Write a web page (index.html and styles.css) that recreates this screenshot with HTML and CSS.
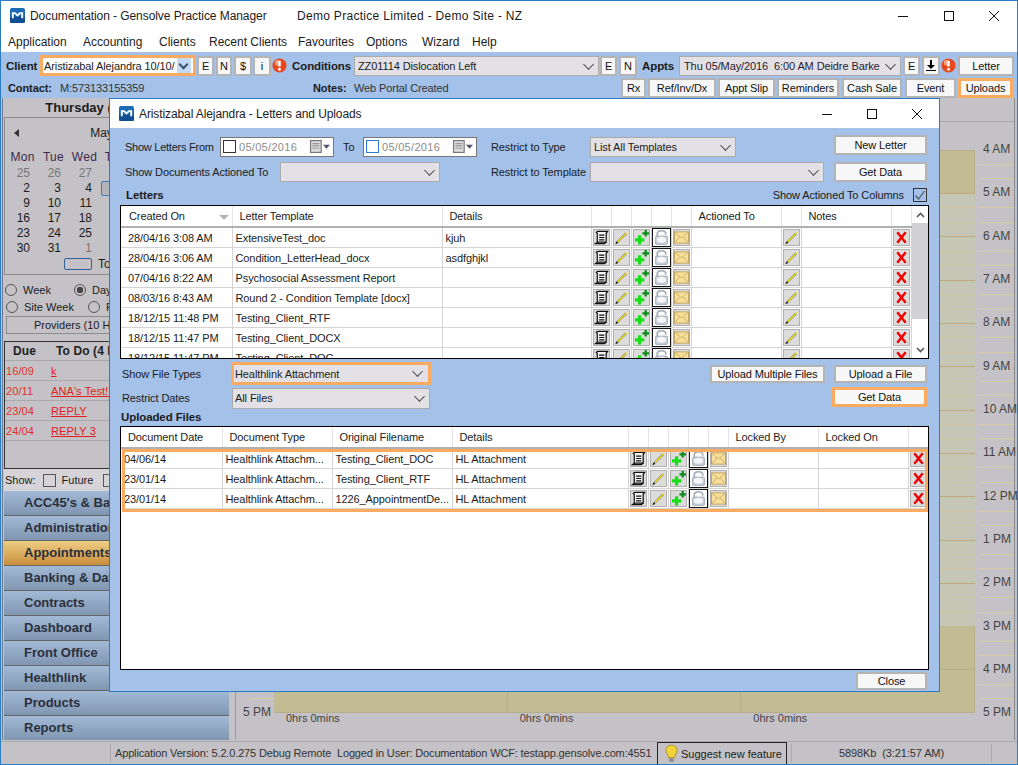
FILE: index.html
```html
<!DOCTYPE html>
<html lang="en-NZ">
<head>
    <meta charset="UTF-8">
    <meta name="viewport" content="width=device-width, initial-scale=1.0">
    <title>Documentation - Gensolve Practice Manager</title>
    <link rel="stylesheet" href="styles.css">
</head>
<body>
    <!-- Icon set used by the grids and toolbars -->
    <svg class="icon-defs" width="0" height="0">
        <symbol id="i-logo" viewBox="0 0 16 16">
            <rect width="16" height="16" rx="2" fill="#1b6cb5"/>
            <rect y="9" width="16" height="7" rx="2" fill="#0f4f92"/>
            <path d="M3 11V5.500h2.400L8 8l2.600-2.500H13V11" fill="none" stroke="#fff" stroke-width="2"/>
        </symbol>
        <symbol id="i-alert" viewBox="0 0 16 16">
            <circle cx="8" cy="8" r="7.500" fill="#e8481c"/>
            <circle cx="6" cy="5" r="3" fill="#f7a47f"/>
            <path d="M8 3v6" stroke="#fff" stroke-width="2.600"/>
            <circle cx="8" cy="12" r="1.500" fill="#fff"/>
        </symbol>
        <symbol id="i-doc" viewBox="0 0 16 16">
            <path d="M4 1.500h10.500L13 3.500V13H3.500V3.500L2.500 2.500zM3.500 13l-2 1.500h9.500l2-1.500" fill="#f2f2f2" stroke="#111" stroke-width="1.300"/>
            <path d="M5.500 5.500h5.500M5.500 8h5.500M5.500 10.500h5.500" stroke="#111" stroke-width="1.200"/>
        </symbol>
        <symbol id="i-pencil" viewBox="0 0 16 16">
            <path d="M3 13.500 13 3.500" stroke="#444" stroke-width="2"/>
            <path d="M4 12.500 13.500 3" stroke="#f7e81a" stroke-width="1.400"/>
            <path d="M1.500 15l2.500-1-1.500-1.500z" fill="#000"/>
        </symbol>
        <symbol id="i-add" viewBox="0 0 16 16">
            <path d="M6 5.500v10M1 10.500h10" stroke="#18e018" stroke-width="3.400"/>
            <path d="M12.500 0v7M9 3.500h7" stroke="#0d8a1a" stroke-width="2.400"/>
        </symbol>
        <symbol id="i-lock" viewBox="0 0 16 16">
            <path d="M3.500 7V4C3.500 1.800 5.500 .8 8 .8s4.500 1 4.500 3.200v1" fill="none" stroke="#a4aebb" stroke-width="1.800"/>
            <rect x="1.500" y="6.500" width="13" height="9" rx="1.500" fill="#c3ccd7" stroke="#949eab" stroke-width=".7"/>
            <ellipse cx="8" cy="10.500" rx="5" ry="3.200" fill="#f3f5f8"/>
        </symbol>
        <symbol id="i-mail" viewBox="0 0 16 16">
            <rect x=".5" y="2" width="15" height="12" fill="#f8e09a" stroke="#bfa25e"/>
            <path d="M1 2.500l7 6 7-6M1 13.500l5-6M15 13.500l-5-6" fill="none" stroke="#c9ab66"/>
        </symbol>
        <symbol id="i-del" viewBox="0 0 16 16">
            <path d="M3.500 2.500 12.500 13.500M12.500 2.500 3.500 13.500" stroke="#f00000" stroke-width="2.600"/>
        </symbol>
        <symbol id="i-bulb" viewBox="0 0 14 20">
            <path d="M7 1C3.500 1 1 3.500 1 6.500c0 3 2.500 4.500 3 8h6c.5-3.500 3-5 3-8C13 3.500 10.500 1 7 1z" fill="#f2d43a" stroke="#b08a20"/>
            <rect x="4.500" y="15" width="5" height="4" rx="1" fill="#8b8b8b"/>
        </symbol>
    </svg>

    <div class="app">
        <!-- Main window chrome -->
        <div class="titlebar">
            <svg class="logo"><use href="#i-logo"/></svg>
            <span class="app-title">Documentation - Gensolve Practice Manager</span>
            <span class="practice-title">Demo Practice Limited - Demo Site - NZ</span>
            <div class="window-controls app-controls">
                <svg viewBox="0 0 10 10"><path d="M0 5.500h10" stroke="#111"/></svg>
                <svg viewBox="0 0 10 10"><rect x=".5" y=".5" width="9" height="9" fill="none" stroke="#111"/></svg>
                <svg viewBox="0 0 10 10"><path d="M0 0l10 10M10 0 0 10" stroke="#111"/></svg>
            </div>
        </div>

        <div class="menubar">
            <span>Application</span>
            <span>Accounting</span>
            <span>Clients</span>
            <span>Recent Clients</span>
            <span>Favourites</span>
            <span>Options</span>
            <span>Wizard</span>
            <span>Help</span>
        </div>

        <div class="toolbar">
            <div class="toolbar-row">
                <b class="lbl-client">Client</b>
                <div class="client-combo"><span>Aristizabal Alejandra 10/10/</span><i class="client-arrow"></i></div>
                <button class="btn w-e">E</button>
                <button class="btn w-n small">N</button>
                <button class="btn w-s">$</button>
                <button class="btn w-i">i</button>
                <svg class="alert"><use href="#i-alert"/></svg>
                <b class="lbl-conditions">Conditions</b>
                <div class="combo w-conditions">ZZ01114 Dislocation Left</div>
                <button class="btn w-e">E</button>
                <button class="btn w-n">N</button>
                <b class="lbl-appts">Appts</b>
                <div class="combo w-appts">Thu 05/May/2016&nbsp; 6:00 AM Deidre Barke</div>
                <button class="btn w-e far">E</button>
                <button class="btn w-n"><svg class="down-icon" viewBox="0 0 10 11"><path d="M5 0v6" stroke="#000" stroke-width="2"/><path d="M1 5h8L5 9z M0 10h10v1H0z" fill="#000"/></svg></button>
                <svg class="alert"><use href="#i-alert"/></svg>
                <button class="btn w-letter">Letter</button>
            </div>
            <div class="toolbar-row second">
                <b class="lbl-contact">Contact:</b>
                <span class="contact-no">M:573133155359</span>
                <b class="lbl-notes">Notes:</b>
                <span class="notes-text">Web Portal Created</span>
                <button class="btn w-rx">Rx</button>
                <button class="btn w-ref">Ref/Inv/Dx</button>
                <button class="btn w-slip">Appt Slip</button>
                <button class="btn w-rem">Reminders</button>
                <button class="btn w-cash">Cash Sale</button>
                <button class="btn w-event">Event</button>
                <button class="btn orange w-uploads">Uploads</button>
            </div>
        </div>

        <div class="workspace">
            <!-- Left side: calendar, to do list, navigation -->
            <div class="left-pane">
                <div class="day-heading">Thursday (5 May 2016)</div>
                <div class="calendar">
                    <div class="cal-nav"><i class="cal-prev"></i><span>May 2016</span></div>
                    <div class="cal-grid cal-dow">
                        <span>Mon</span><span>Tue</span><span>Wed</span><span>Thu</span><span>Fri</span><span>Sat</span><span>Sun</span>
                    </div>
                    <div class="cal-grid cal-days">
                        <span class="off">25</span><span class="off">26</span><span class="off">27</span><span class="off">28</span><span class="off">29</span><span class="off">30</span><span>1</span>
                        <span>2</span><span>3</span><span>4</span><span class="sel">5</span><span>6</span><span>7</span><span>8</span>
                        <span>9</span><span>10</span><span>11</span><span>12</span><span>13</span><span>14</span><span>15</span>
                        <span>16</span><span>17</span><span>18</span><span>19</span><span>20</span><span>21</span><span>22</span>
                        <span>23</span><span>24</span><span>25</span><span>26</span><span>27</span><span>28</span><span>29</span>
                        <span>30</span><span>31</span><span class="off">1</span><span class="off">2</span><span class="off">3</span><span class="off">4</span><span class="off">5</span>
                    </div>
                    <div class="cal-today"><i></i>Today: 5/05/2016</div>
                </div>
                <div class="view-options">
                    <label class="radio r-week"><i></i>Week</label>
                    <label class="radio r-day"><i class="on"></i>Day</label>
                </div>
                <div class="view-options">
                    <label class="radio r-site"><i></i>Site Week</label>
                    <label class="radio"><i></i>Fortnight</label>
                </div>
                <div class="providers">Providers (10 Hidden)</div>

                <div class="todo">
                    <div class="todo-row todo-head"><span>Due</span><span>To Do (4 Items)</span></div>
                    <div class="todo-row"><span>16/09</span><a>k</a></div>
                    <div class="todo-row"><span>20/11</span><a>ANA's Test! Follow up</a></div>
                    <div class="todo-row"><span>23/04</span><a>REPLY</a></div>
                    <div class="todo-row"><span>24/04</span><a>REPLY 3</a></div>
                </div>
                <div class="todo-show">Show: <i></i> Future <i class="second-box"></i> Completed</div>

                <div class="nav-item">ACC45's &amp; Batches</div>
                <div class="nav-item">Administration</div>
                <div class="nav-item active">Appointments</div>
                <div class="nav-item">Banking &amp; Day End</div>
                <div class="nav-item">Contracts</div>
                <div class="nav-item">Dashboard</div>
                <div class="nav-item">Front Office</div>
                <div class="nav-item">Healthlink</div>
                <div class="nav-item">Products</div>
                <div class="nav-item">Reports</div>
            </div>

            <!-- Schedule behind the dialog -->
            <div class="schedule">
                <div class="schedule-head"></div>
                <div class="schedule-body">
                    <div class="hours hours-left">
                        <div class="hour">4 AM</div><div class="hour">5 AM</div><div class="hour">6 AM</div><div class="hour">7 AM</div><div class="hour">8 AM</div><div class="hour">9 AM</div><div class="hour">10 AM</div><div class="hour">11 AM</div><div class="hour">12 PM</div><div class="hour">1 PM</div><div class="hour">2 PM</div><div class="hour">3 PM</div><div class="hour">4 PM</div><div class="hour">5 PM</div>
                    </div>
                    <div class="day-col"><div class="closed one"></div><div class="open"></div><div class="closed two"></div><div class="day-total">0hrs 0mins</div></div>
                    <div class="day-col"><div class="closed one"></div><div class="open"></div><div class="closed two"></div><div class="day-total">0hrs 0mins</div></div>
                    <div class="day-col"><div class="closed one"></div><div class="open"></div><div class="closed two"></div><div class="day-total">0hrs 0mins</div></div>
                    <div class="hours hours-right">
                        <div class="hour">4 AM</div><div class="hour">5 AM</div><div class="hour">6 AM</div><div class="hour">7 AM</div><div class="hour">8 AM</div><div class="hour">9 AM</div><div class="hour">10 AM</div><div class="hour">11 AM</div><div class="hour">12 PM</div><div class="hour">1 PM</div><div class="hour">2 PM</div><div class="hour">3 PM</div><div class="hour">4 PM</div><div class="hour">5 PM</div>
                    </div>
                </div>
            </div>
        </div>

        <div class="statusbar">
            <span class="status-empty"></span>
            <span class="status-version">Application Version: 5.2.0.275 Debug Remote&nbsp; Logged in User: Documentation WCF: testapp.gensolve.com:4551</span>
            <span class="status-suggest"><svg><use href="#i-bulb"/></svg>Suggest new feature</span>
            <span class="status-memory">5898Kb&nbsp; (3:21:57 AM)</span>
        </div>

        <!-- Letters and Uploads dialog -->
        <div class="dialog">
            <div class="dialog-title">
                <svg class="logo"><use href="#i-logo"/></svg>
                <span>Aristizabal Alejandra - Letters and Uploads</span>
                <div class="window-controls dialog-controls">
                    <svg viewBox="0 0 10 10"><path d="M0 5.500h10" stroke="#111"/></svg>
                    <svg viewBox="0 0 10 10"><rect x=".5" y=".5" width="9" height="9" fill="none" stroke="#111"/></svg>
                    <svg viewBox="0 0 10 10"><path d="M0 0l10 10M10 0 0 10" stroke="#111"/></svg>
                </div>
            </div>

            <div class="dialog-body">
                <div class="filter-row row-a">
                    <label class="l-from">Show Letters From</label>
                    <div class="date-box"><i class="date-check"></i>05/05/2016<svg class="cal-icon" viewBox="0 0 17 11"><rect x=".5" y=".5" width="9" height="10" fill="#ddd" stroke="#777"/><path d="M2 3h6M2 5h6M2 7h6" stroke="#999"/><path d="M11 4h6l-3 3.500z" fill="#556"/></svg></div>
                    <label class="l-to">To</label>
                    <div class="date-box"><i class="date-check focus"></i>05/05/2016<svg class="cal-icon" viewBox="0 0 17 11"><rect x=".5" y=".5" width="9" height="10" fill="#ddd" stroke="#777"/><path d="M2 3h6M2 5h6M2 7h6" stroke="#999"/><path d="M11 4h6l-3 3.500z" fill="#556"/></svg></div>
                    <label class="l-restrict">Restrict to Type</label>
                    <div class="combo w-type">List All Templates</div>
                    <button class="btn w-action">New Letter</button>
                </div>
                <div class="filter-row row-b">
                    <label class="l-actioned">Show Documents Actioned To</label>
                    <div class="combo w-actioned"></div>
                    <label class="l-restrict">Restrict to Template</label>
                    <div class="combo w-template"></div>
                    <button class="btn w-action">Get Data</button>
                </div>
                <div class="section-row">
                    <b>Letters</b>
                    <span class="show-columns">Show Actioned To Columns</span>
                    <i class="checkbox"><svg viewBox="0 0 12 12"><path d="M1.500 6.500 4.500 10 10.500 2" fill="none" stroke="#555" stroke-width="1.200"/></svg></i>
                </div>

                <div class="grid letters-grid">
                    <table>
                        <colgroup>
                            <col class="c-created"><col class="c-template"><col class="c-details">
                            <col class="c-i"><col class="c-i"><col class="c-i"><col class="c-i"><col class="c-i">
                            <col class="c-mid"><col class="c-i"><col class="c-mid"><col class="c-i">
                        </colgroup>
                        <thead>
                            <tr><th class="first">Created On<i class="sort-arrow"></i></th><th>Letter Template</th><th>Details</th><th></th><th></th><th></th><th></th><th></th><th>Actioned To</th><th></th><th>Notes</th><th></th></tr>
                        </thead>
                        <tbody>
                            <tr>
                                <td class="first">28/04/16 3:08 AM</td><td>ExtensiveTest_doc</td><td>kjuh</td>
                                <td class="ic"><span class="ib"><svg><use href="#i-doc"/></svg></span></td><td class="ic"><span class="ib"><svg><use href="#i-pencil"/></svg></span></td><td class="ic"><span class="ib"><svg><use href="#i-add"/></svg></span></td><td class="ic"><span class="ib lock"><svg><use href="#i-lock"/></svg></span></td><td class="ic"><span class="ib"><svg><use href="#i-mail"/></svg></span></td>
                                <td></td><td class="ic"><span class="ib"><svg><use href="#i-pencil"/></svg></span></td><td></td><td class="ic"><span class="ib"><svg><use href="#i-del"/></svg></span></td>
                            </tr>
                            <tr>
                                <td class="first">28/04/16 3:06 AM</td><td>Condition_LetterHead_docx</td><td>asdfghjkl</td>
                                <td class="ic"><span class="ib"><svg><use href="#i-doc"/></svg></span></td><td class="ic"><span class="ib"><svg><use href="#i-pencil"/></svg></span></td><td class="ic"><span class="ib"><svg><use href="#i-add"/></svg></span></td><td class="ic"><span class="ib lock"><svg><use href="#i-lock"/></svg></span></td><td class="ic"><span class="ib"><svg><use href="#i-mail"/></svg></span></td>
                                <td></td><td class="ic"><span class="ib"><svg><use href="#i-pencil"/></svg></span></td><td></td><td class="ic"><span class="ib"><svg><use href="#i-del"/></svg></span></td>
                            </tr>
                            <tr>
                                <td class="first">07/04/16 8:22 AM</td><td>Psychosocial Assessment Report</td><td></td>
                                <td class="ic"><span class="ib"><svg><use href="#i-doc"/></svg></span></td><td class="ic"><span class="ib"><svg><use href="#i-pencil"/></svg></span></td><td class="ic"><span class="ib"><svg><use href="#i-add"/></svg></span></td><td class="ic"><span class="ib lock"><svg><use href="#i-lock"/></svg></span></td><td class="ic"><span class="ib"><svg><use href="#i-mail"/></svg></span></td>
                                <td></td><td class="ic"><span class="ib"><svg><use href="#i-pencil"/></svg></span></td><td></td><td class="ic"><span class="ib"><svg><use href="#i-del"/></svg></span></td>
                            </tr>
                            <tr>
                                <td class="first">08/03/16 8:43 AM</td><td>Round 2 - Condition Template [docx]</td><td></td>
                                <td class="ic"><span class="ib"><svg><use href="#i-doc"/></svg></span></td><td class="ic"><span class="ib"><svg><use href="#i-pencil"/></svg></span></td><td class="ic"><span class="ib"><svg><use href="#i-add"/></svg></span></td><td class="ic"><span class="ib lock"><svg><use href="#i-lock"/></svg></span></td><td class="ic"><span class="ib"><svg><use href="#i-mail"/></svg></span></td>
                                <td></td><td class="ic"><span class="ib"><svg><use href="#i-pencil"/></svg></span></td><td></td><td class="ic"><span class="ib"><svg><use href="#i-del"/></svg></span></td>
                            </tr>
                            <tr>
                                <td class="first">18/12/15 11:48 PM</td><td>Testing_Client_RTF</td><td></td>
                                <td class="ic"><span class="ib"><svg><use href="#i-doc"/></svg></span></td><td class="ic"><span class="ib"><svg><use href="#i-pencil"/></svg></span></td><td class="ic"><span class="ib"><svg><use href="#i-add"/></svg></span></td><td class="ic"><span class="ib lock"><svg><use href="#i-lock"/></svg></span></td><td class="ic"><span class="ib"><svg><use href="#i-mail"/></svg></span></td>
                                <td></td><td class="ic"><span class="ib"><svg><use href="#i-pencil"/></svg></span></td><td></td><td class="ic"><span class="ib"><svg><use href="#i-del"/></svg></span></td>
                            </tr>
                            <tr>
                                <td class="first">18/12/15 11:47 PM</td><td>Testing_Client_DOCX</td><td></td>
                                <td class="ic"><span class="ib"><svg><use href="#i-doc"/></svg></span></td><td class="ic"><span class="ib"><svg><use href="#i-pencil"/></svg></span></td><td class="ic"><span class="ib"><svg><use href="#i-add"/></svg></span></td><td class="ic"><span class="ib lock"><svg><use href="#i-lock"/></svg></span></td><td class="ic"><span class="ib"><svg><use href="#i-mail"/></svg></span></td>
                                <td></td><td class="ic"><span class="ib"><svg><use href="#i-pencil"/></svg></span></td><td></td><td class="ic"><span class="ib"><svg><use href="#i-del"/></svg></span></td>
                            </tr>
                            <tr>
                                <td class="first">18/12/15 11:47 PM</td><td>Testing_Client_DOC</td><td></td>
                                <td class="ic"><span class="ib"><svg><use href="#i-doc"/></svg></span></td><td class="ic"><span class="ib"><svg><use href="#i-pencil"/></svg></span></td><td class="ic"><span class="ib"><svg><use href="#i-add"/></svg></span></td><td class="ic"><span class="ib lock"><svg><use href="#i-lock"/></svg></span></td><td class="ic"><span class="ib"><svg><use href="#i-mail"/></svg></span></td>
                                <td></td><td class="ic"><span class="ib"><svg><use href="#i-pencil"/></svg></span></td><td></td><td class="ic"><span class="ib"><svg><use href="#i-del"/></svg></span></td>
                            </tr>
                        </tbody>
                    </table>
                    <div class="scrollbar">
                        <svg class="scroll-up" viewBox="0 0 9 6"><path d="M1 5l3.500-3.500L8 5" fill="none" stroke="#555" stroke-width="1.600"/></svg>
                        <div class="scroll-thumb"></div>
                        <svg class="scroll-down" viewBox="0 0 9 6"><path d="M1 1l3.500 3.500L8 1" fill="none" stroke="#555" stroke-width="1.600"/></svg>
                    </div>
                </div>

                <div class="filter-row row-c">
                    <label class="l-files">Show File Types</label>
                    <div class="combo orange-combo">Healthlink Attachment</div>
                    <button class="btn w-multi">Upload Multiple Files</button>
                    <button class="btn w-action">Upload a File</button>
                </div>
                <div class="filter-row row-d">
                    <label class="l-files">Restrict Dates</label>
                    <div class="combo w-dates">All Files</div>
                    <button class="btn orange w-getdata">Get Data</button>
                </div>
                <div class="uploaded-title"><b>Uploaded Files</b></div>

                <div class="grid uploads-grid">
                    <table>
                        <colgroup>
                            <col class="c-docdate"><col class="c-doctype"><col class="c-filename"><col class="c-updetails">
                            <col class="c-i"><col class="c-i"><col class="c-i"><col class="c-i"><col class="c-i">
                            <col class="c-mid"><col class="c-mid"><col class="c-i">
                        </colgroup>
                        <thead>
                            <tr><th>Document Date</th><th>Document Type</th><th>Original Filename</th><th>Details</th><th></th><th></th><th></th><th></th><th></th><th>Locked By</th><th>Locked On</th><th></th></tr>
                        </thead>
                        <tbody>
                            <tr>
                                <td>04/06/14</td><td>Healthlink Attachm...</td><td>Testing_Client_DOC</td><td>HL Attachment</td>
                                <td class="ic"><span class="ib"><svg><use href="#i-doc"/></svg></span></td><td class="ic"><span class="ib"><svg><use href="#i-pencil"/></svg></span></td><td class="ic"><span class="ib"><svg><use href="#i-add"/></svg></span></td><td class="ic"><span class="ib lock"><svg><use href="#i-lock"/></svg></span></td><td class="ic"><span class="ib"><svg><use href="#i-mail"/></svg></span></td>
                                <td></td><td></td><td class="ic"><span class="ib"><svg><use href="#i-del"/></svg></span></td>
                            </tr>
                            <tr>
                                <td>23/01/14</td><td>Healthlink Attachm...</td><td>Testing_Client_RTF</td><td>HL Attachment</td>
                                <td class="ic"><span class="ib"><svg><use href="#i-doc"/></svg></span></td><td class="ic"><span class="ib"><svg><use href="#i-pencil"/></svg></span></td><td class="ic"><span class="ib"><svg><use href="#i-add"/></svg></span></td><td class="ic"><span class="ib lock"><svg><use href="#i-lock"/></svg></span></td><td class="ic"><span class="ib"><svg><use href="#i-mail"/></svg></span></td>
                                <td></td><td></td><td class="ic"><span class="ib"><svg><use href="#i-del"/></svg></span></td>
                            </tr>
                            <tr>
                                <td>23/01/14</td><td>Healthlink Attachm...</td><td>1226_AppointmentDe...</td><td>HL Attachment</td>
                                <td class="ic"><span class="ib"><svg><use href="#i-doc"/></svg></span></td><td class="ic"><span class="ib"><svg><use href="#i-pencil"/></svg></span></td><td class="ic"><span class="ib"><svg><use href="#i-add"/></svg></span></td><td class="ic"><span class="ib lock"><svg><use href="#i-lock"/></svg></span></td><td class="ic"><span class="ib"><svg><use href="#i-mail"/></svg></span></td>
                                <td></td><td></td><td class="ic"><span class="ib"><svg><use href="#i-del"/></svg></span></td>
                            </tr>
                        </tbody>
                    </table>
                    <div class="row-highlight"></div>
                </div>

                <div class="dialog-footer"><button class="btn w-close">Close</button></div>
            </div>
        </div>
    </div>
</body>
</html>
```

FILE: styles.css
```css
* {
    box-sizing: border-box;
}

body {
    margin: 0;
    font-family: "Liberation Sans", Arial, sans-serif;
    font-size: 11px;
    letter-spacing: -0.1px;
    color: #1c1c1c;
}

.icon-defs {
    position: absolute;
}

.app {
    position: relative;
    width: 1018px;
    height: 765px;
    overflow: hidden;
    display: flex;
    flex-direction: column;
    border: 1px solid #2b7cc4;
    background-color: #c4c2c6;
}

/* Window chrome */
.titlebar {
    height: 29px;
    flex: none;
    display: flex;
    align-items: center;
    font-size: 12px;
    background-color: white;
}

.logo {
    width: 15px;
    height: 15px;
    flex: none;
}

.titlebar .logo {
    margin-left: 9px;
}

.app-title {
    margin-left: 5px;
    width: 267px;
    letter-spacing: -0.07px;
}

.practice-title {
    letter-spacing: 0.3px;
}

.window-controls {
    margin-left: auto;
    display: flex;
}

.window-controls svg {
    width: 10px;
    height: 10px;
}

.app-controls {
    gap: 35.500px;
    margin-right: 18px;
}

.dialog-controls {
    gap: 35px;
    margin-right: 17px;
}

.menubar {
    height: 22px;
    flex: none;
    display: grid;
    grid-template-columns: 75px 76px 50px 89px 68px 56px 50px auto;
    padding: 2px 0 0 7px;
    align-items: center;
    font-size: 12px;
    letter-spacing: 0;
    background-color: white;
}

.toolbar {
    height: 46px;
    flex: none;
    padding-top: 3px;
    background-color: #a3c1e9;
}

.toolbar b {
    flex: none;
}

.toolbar-row {
    display: flex;
    align-items: center;
    height: 21px;
}

.toolbar-row.second {
    margin-top: 2px;
    height: 20px;
}

.btn {
    height: 20px;
    padding: 0;
    flex: none;
    font: inherit;
    letter-spacing: inherit;
    white-space: nowrap;
    color: #111;
    background-color: #f7f7f7;
    border: 2px solid #b4b4b4;
    border-radius: 0;
}

.btn.orange {
    border: 3px solid #fbab60;
}

.combo {
    position: relative;
    height: 20px;
    flex: none;
    padding: 0 20px 0 3px;
    line-height: 18px;
    white-space: nowrap;
    overflow: hidden;
    background-color: #e3e1e5;
    border: 1px solid #aaa;
}

.combo::after {
    content: "";
    position: absolute;
    right: 6px;
    top: 4px;
    width: 6px;
    height: 6px;
    border-right: 1px solid #555;
    border-bottom: 1px solid #555;
    transform: rotate(45deg) scale(1.1);
}

.lbl-client {
    margin-left: 5px;
    width: 34px;
    font-size: 11.500px;
}

.client-combo {
    width: 156px;
    height: 21px;
    flex: none;
    display: flex;
    align-items: center;
    padding-left: 1px;
    background-color: white;
    border: 3px solid #fbab60;
    white-space: nowrap;
    overflow: hidden;
}

.client-combo span {
    width: 131px;
    flex: none;
    overflow: hidden;
}

.client-arrow {
    position: relative;
    width: 14px;
    height: 15px;
    margin-left: 2px;
    flex: none;
    background-color: #c2d9f3;
}

.client-arrow::after {
    content: "";
    position: absolute;
    left: 3px;
    top: 3px;
    width: 5px;
    height: 5px;
    border-right: 2px solid #3c5068;
    border-bottom: 2px solid #3c5068;
    transform: rotate(45deg);
}

.w-e { width: 17px; margin-left: 1px; }
.w-e.far { margin-left: 2px; }
.w-n { width: 18px; margin-left: 2px; }
.w-n.small { width: 16px; }
.w-s { width: 18px; margin-left: 2px; }
.w-i { width: 18px; margin-left: 1px; }

.alert {
    width: 15px;
    height: 15px;
    flex: none;
    margin-left: 1px;
}

.down-icon {
    width: 10px;
    height: 11px;
    display: block;
    margin: auto;
}

.lbl-conditions {
    margin-left: 5px;
    width: 62px;
    font-size: 11.500px;
}

.w-conditions { width: 245px; }

.lbl-appts {
    margin-left: 5px;
    width: 37px;
    font-size: 11.500px;
}

.w-appts { width: 222px; padding-left: 4px; color: #2a1a30; }
.w-letter { width: 56px; margin-left: 2px; }

.lbl-contact {
    margin-left: 7px;
    width: 52px;
}

.contact-no {
    width: 253px;
    flex: none;
    color: #333;
}

.lbl-notes {
    width: 41px;
}

.notes-text {
    width: 267px;
    flex: none;
    color: #333;
}

.w-rx { width: 25px; }
.w-ref { width: 68px; margin-left: 2px; }
.w-slip { width: 57px; margin-left: 2px; }
.w-rem { width: 62px; margin-left: 2px; }
.w-cash { width: 60px; margin-left: 3px; }
.w-event { width: 51px; margin-left: 3px; }
.w-uploads { width: 55px; margin-left: 2px; }

.workspace {
    flex: 1;
    min-height: 0;
    display: flex;
    padding-left: 1px;
}

/* Left pane */
.left-pane {
    width: 227px;
    flex: none;
    padding-left: 1px;
    border-left: 1px solid #6b7d95;
    overflow: hidden;
}

.day-heading {
    height: 19px;
    line-height: 19px;
    padding-right: 3px;
    text-align: center;
    font-weight: bold;
    font-size: 13px;
    letter-spacing: 0;
    white-space: nowrap;
}

.calendar {
    height: 158px;
    font-size: 12px;
    letter-spacing: 0;
    border: 1px solid #8c8c8c;
}

.cal-nav {
    position: relative;
    height: 32px;
    padding-top: 8px;
    text-align: center;
}

.cal-prev {
    position: absolute;
    left: 9px;
    top: 11px;
    border: 4px solid transparent;
    border-left-width: 0;
    border-right: 5px solid #333;
}

.cal-grid {
    display: grid;
    grid-template-columns: repeat(7, 31px);
    padding-left: 2px;
}

.cal-dow {
    height: 16px;
    text-align: center;
    color: #3d2a4a;
    letter-spacing: 0.3px;
}

.cal-days span {
    height: 15px;
    line-height: 15px;
    text-align: right;
    padding-right: 8px;
}

.cal-days .off {
    color: #777;
}

.cal-days .sel {
    background-color: #b4b4b8;
    border: 1px solid #3a7cc0;
    border-radius: 2px;
    margin-left: 1px;
}

.cal-today {
    margin-top: 1px;
    padding-left: 59px;
    display: flex;
    align-items: center;
    gap: 6px;
    white-space: nowrap;
}

.cal-today i {
    width: 28px;
    height: 12px;
    flex: none;
    border: 1px solid #2f5f96;
    border-radius: 2px;
}

.view-options {
    display: flex;
    height: 17px;
    align-items: center;
}

.calendar + .view-options {
    margin-top: 6px;
}

.radio {
    display: flex;
    align-items: center;
    gap: 6px;
    letter-spacing: 0;
}

.radio i {
    width: 12px;
    height: 12px;
    border: 1px solid #555;
    border-radius: 50%;
}

.radio i.on {
    background: radial-gradient(circle, #444 0 3px, transparent 3.500px);
}

.r-week { width: 69px; margin-left: 1px; }
.r-site { width: 82px; margin-left: 2px; }

.providers {
    height: 18px;
    margin: 1px 0 0 2px;
    padding-left: 27px;
    line-height: 16px;
    letter-spacing: 0;
    white-space: nowrap;
    border: 1px solid #8c8c8c;
}

.todo {
    height: 128px;
    margin-top: 7px;
    border: 1px solid #333;
    border-right: none;
}

.todo-row {
    display: flex;
    height: 20px;
    align-items: center;
    padding-left: 1px;
    letter-spacing: 0.1px;
    color: #e03030;
    border-bottom: 1px solid #a9a7ab;
    white-space: nowrap;
}

.todo-row span {
    width: 45px;
    flex: none;
}

.todo-row a {
    text-decoration: underline;
    color: #e02020;
}

.todo-row.todo-head {
    height: 19px;
    color: #222;
    font-weight: bold;
    font-size: 12px;
    padding-left: 8px;
}

.todo-head span:first-child {
    width: 43px;
}

.todo-show {
    height: 22px;
    display: flex;
    align-items: center;
    padding-left: 1px;
    gap: 6px;
    white-space: nowrap;
    letter-spacing: 0;
    background-color: #d6d4d8;
}

.todo-show i {
    width: 13px;
    height: 13px;
    flex: none;
    border: 1px solid #555;
    margin-left: 1px;
}

.todo-show i.second-box {
    margin-left: 4px;
}

.nav-item {
    height: 25px;
    padding-left: 20px;
    line-height: 23px;
    font-size: 13px;
    font-weight: bold;
    letter-spacing: 0;
    color: #2b303c;
    white-space: nowrap;
    background: linear-gradient(#a2bad6, #8096b1);
    border-bottom: 1px solid #666;
}

.nav-item.active {
    background: linear-gradient(#eecd85, #c98f3c);
}

/* Schedule */
.schedule {
    width: 780px;
    flex: none;
    margin-left: 6px;
    border-left: 1px solid #999;
    border-right: 1px solid #8a8a8a;
}

.schedule-head {
    height: 24px;
    border-bottom: 1px solid #aaa8ac;
}

.schedule-body {
    display: flex;
    height: 618px;
}

.hours {
    padding-top: 6px;
    flex: none;
    font-size: 12px;
    letter-spacing: 0;
    color: #444;
}

.hours-left {
    width: 38px;
}

.hours-right {
    width: 39px;
    padding-left: 5px;
}

.hour {
    height: 43.330px;
    padding-left: 3px;
    line-height: 43.330px;
    white-space: nowrap;
    background-image: linear-gradient(#d6cfa4, #d6cfa4), linear-gradient(#d6cfa4, #d6cfa4);
    background-repeat: no-repeat;
    background-size: 100% 1px;
    background-position: 0 7px, 0 36px;
}

.hours-left .hour {
    margin-left: 14px;
    padding-left: 0;
    text-indent: -7px;
}

.hour:first-child {
    background-image: linear-gradient(transparent, transparent), linear-gradient(#d6cfa4, #d6cfa4);
}

.hour:last-child {
    background-image: linear-gradient(#d6cfa4, #d6cfa4), linear-gradient(transparent, transparent);
}

.day-col {
    width: 233.670px;
    flex: none;
    padding-top: 28px;
}

.closed {
    background-color: #c3bb93;
    border-right: 1px solid #b6ae88;
}

.closed.one {
    height: 43px;
    border-top: 1px solid #b6ae88;
}

.closed.two {
    height: 87px;
    border-bottom: 1px solid #b6ae88;
    background-image: linear-gradient(#b6ae88, #b6ae88);
    background-repeat: no-repeat;
    background-size: 100% 1px;
    background-position: 0 43px;
}

.open {
    height: 433px;
    background-color: #c6c6b6;
    background-image:
        repeating-linear-gradient(#c3a97e 0 1px, transparent 1px 43.330px),
        repeating-linear-gradient(#cfc9a2 0 1px, transparent 1px 14.440px);
}

.day-total {
    padding-left: 12px;
    margin-top: -1px;
    letter-spacing: 0;
    color: #444;
}

/* Status bar */
.statusbar {
    height: 23px;
    flex: none;
    display: flex;
    align-items: center;
    margin-top: 1px;
    background-color: #c4c2c6;
    border-top: 1px solid #aaa;
}

.status-empty {
    width: 110px;
    height: 18px;
    border-right: 1px solid #aaa;
}

.status-version {
    width: 546px;
    padding-left: 4px;
    color: #333;
    white-space: nowrap;
    letter-spacing: -0.15px;
}

.status-suggest {
    width: 130px;
    height: 22px;
    display: flex;
    align-items: center;
    gap: 3px;
    padding-left: 7px;
    letter-spacing: 0;
    white-space: nowrap;
    border: 1px solid #222;
    border-bottom: none;
}

.status-suggest svg {
    width: 13px;
    height: 19px;
    flex: none;
}

.status-memory {
    width: 201px;
    height: 18px;
    margin-left: 4px;
    line-height: 18px;
    text-align: center;
    color: #333;
    border-left: 1px solid #aaa;
    border-right: 1px solid #aaa;
}

/* Dialog */
.dialog {
    position: absolute;
    left: 108px;
    top: 97px;
    width: 831px;
    height: 594px;
    display: flex;
    flex-direction: column;
    background-color: #a3c1e9;
    border: 1px solid #2b7cc4;
}

.dialog-title {
    height: 29px;
    flex: none;
    display: flex;
    align-items: center;
    padding-left: 9px;
    gap: 5px;
    font-size: 12px;
    background-color: white;
}

.dialog-body {
    flex: 1;
    padding: 0 10px;
}

.filter-row {
    display: flex;
    align-items: center;
    white-space: nowrap;
}

.row-a {
    height: 22px;
    margin-top: 7px;
}

.row-a .btn {
    align-self: flex-start;
}

.row-a .date-box,
.row-a .combo {
    margin-top: 1px;
}

.row-a label {
    padding-top: 2px;
}

.row-b {
    height: 22px;
    margin-top: 4px;
}

.l-from {
    width: 100px;
    padding-left: 5px;
    letter-spacing: -0.25px;
    flex: none;
}

.date-box {
    width: 114px;
    height: 20px;
    flex: none;
    display: flex;
    align-items: center;
    padding-left: 2px;
    gap: 3px;
    color: #8c8c8c;
    letter-spacing: 0.3px;
    background-color: white;
    border: 1px solid #777;
}

.date-check {
    width: 13px;
    height: 13px;
    flex: none;
    border: 1px solid #333;
}

.date-check.focus {
    border-color: #2b7cd0;
}

.cal-icon {
    width: 22px;
    height: 13px;
    margin-left: auto;
    margin-right: 2px;
}

.l-to {
    width: 29px;
    padding-left: 9px;
    flex: none;
}

.l-restrict {
    width: 113px;
    padding-left: 14px;
    flex: none;
}

.w-type { width: 146px; }
.w-action { width: 93px; margin-left: auto; margin-right: 2px; }

.l-actioned {
    width: 160px;
    padding-left: 5px;
    flex: none;
}

.w-actioned { width: 160px; }
.row-b .l-restrict { margin-left: 37px; }
.w-template { width: 234px; }

.section-row {
    height: 19px;
    margin-top: 3px;
    padding: 0 0 2px 6px;
    display: flex;
    align-items: center;
}

.section-row b,
.uploaded-title b {
    font-size: 11.500px;
}

.show-columns {
    margin-left: auto;
    margin-right: 9px;
}

.checkbox {
    width: 14px;
    height: 14px;
    margin-right: 2px;
    border: 1px solid #333;
}

.checkbox svg {
    display: block;
    width: 12px;
    height: 12px;
}

/* Grids */
.grid {
    position: relative;
    display: flex;
    background-color: white;
    border: 1px solid black;
    overflow: hidden;
}

.letters-grid {
    height: 154px;
}

.uploads-grid {
    height: 244px;
}

.grid table {
    border-collapse: collapse;
    table-layout: fixed;
    width: 790px;
    flex: none;
    align-self: flex-start;
}

.uploads-grid table {
    width: 807px;
}

.c-created { width: 111px; }
.c-template { width: 210px; }
.c-details { width: 149px; }
.c-i { width: 20px; }
.c-mid { width: 90px; }
.c-docdate { width: 101px; }
.c-doctype { width: 110px; }
.c-filename { width: 120px; }
.c-updetails { width: 176px; }

.grid th {
    height: 21px;
    padding: 0 0 0 7px;
    font-weight: normal;
    text-align: left;
    white-space: nowrap;
    border-right: 1px solid #e4e4e4;
    border-bottom: 2px solid #b0b0b0;
    position: relative;
}

.grid th.first {
    padding-left: 8px;
}

.grid td {
    height: 20px;
    padding: 0 0 0 3px;
    white-space: nowrap;
    overflow: hidden;
    border-right: 1px solid #d4d4d4;
    border-bottom: 1px solid #d4d4d4;
}

.grid td.first {
    padding-left: 7px;
}

.grid td.ic {
    padding: 0;
    text-align: center;
    line-height: 0;
}

.sort-arrow {
    position: absolute;
    right: 3px;
    top: 9px;
    border: 5px solid transparent;
    border-top: 5px solid #b4b4b4;
    border-bottom: none;
}

.ib {
    display: inline-flex;
    width: 17px;
    height: 17px;
    align-items: center;
    justify-content: center;
    background-color: #dcdcdc;
    border: 1px solid #b0b0b0;
}

.ib svg {
    width: 15px;
    height: 15px;
}

.ib.lock {
    width: 19px;
    height: 19px;
    background-color: white;
    border: 1.500px solid #111;
}

.scrollbar {
    width: 17px;
    flex: none;
    position: relative;
    background-color: white;
}

.scroll-up,
.scroll-down {
    position: absolute;
    left: 4px;
    width: 9px;
    height: 6px;
}

.scroll-up { top: 6px; }
.scroll-down { bottom: 5px; }

.scroll-thumb {
    position: absolute;
    top: 17px;
    left: 0;
    width: 16px;
    height: 96px;
    background-color: #d2d2d6;
}

.row-c {
    height: 23px;
    margin-top: 3px;
}

.row-d {
    height: 22px;
    margin-top: 2px;
}

.l-files {
    width: 111px;
    padding-left: 2px;
    flex: none;
}

.orange-combo {
    width: 200px;
    height: 23px;
    padding-left: 1px;
    line-height: 18px;
    border: 3px solid #fbab60;
}

.orange-combo::after {
    top: 3px;
    right: 7px;
}

.w-dates {
    width: 198px;
    height: 21px;
    margin-left: 1px;
    padding-left: 2px;
}

.row-c .btn {
    height: 18px;
}

.w-multi {
    width: 115px;
    margin-left: 279px;
}

.row-c .w-action {
    margin-left: 9px;
}

.w-getdata {
    width: 95px;
    margin-left: auto;
    margin-right: 2px;
    align-self: flex-start;
}

.uploaded-title {
    height: 17px;
    padding: 2px 0 0 1px;
}

.row-highlight {
    position: absolute;
    left: 1px;
    top: 22px;
    width: 806px;
    height: 63px;
    border: 3px solid #fbab60;
    pointer-events: none;
}

.dialog-footer {
    display: flex;
    justify-content: flex-end;
    padding: 2px 2px 0 0;
}

.w-close {
    width: 71px;
    height: 18px;
}
```
